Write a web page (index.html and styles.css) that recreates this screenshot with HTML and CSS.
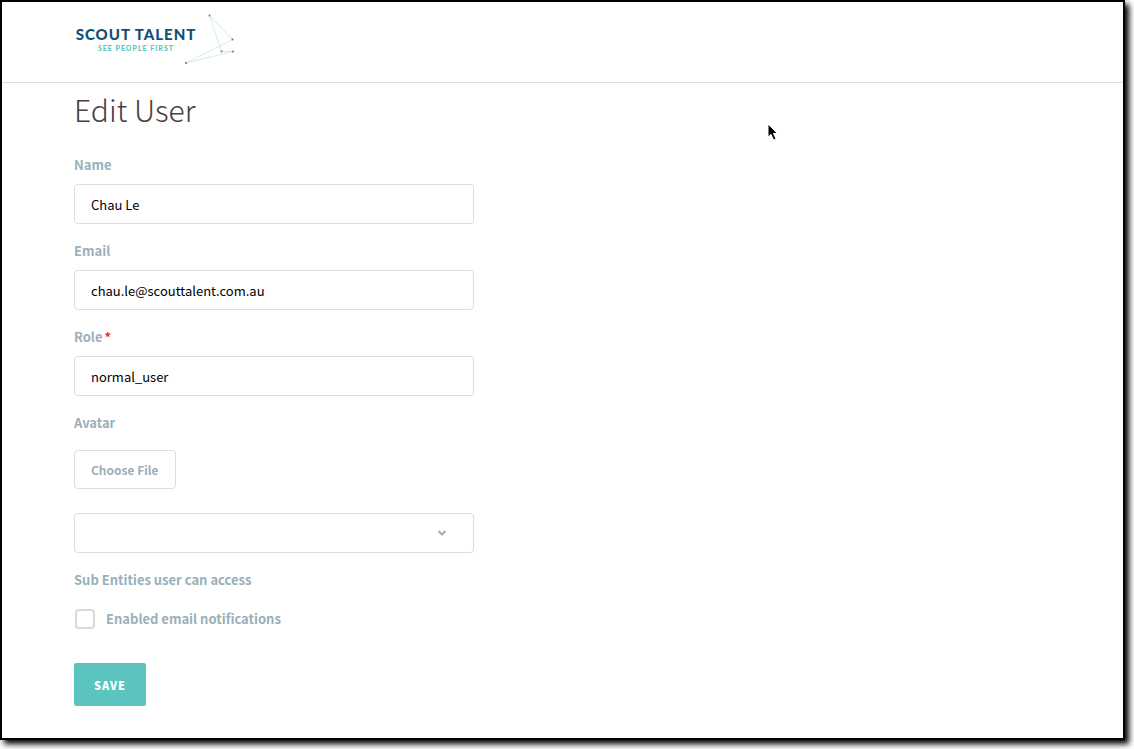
FILE: index.html
```html
<!DOCTYPE html>
<html lang="en">
<head>
  <meta charset="UTF-8">
  <meta name="viewport" content="width=device-width, initial-scale=1">
  <title>Edit User</title>
  <link rel="stylesheet" href="styles.css">
</head>
<body>

<div class="window">
  <header class="header">
    <a class="logo" href="#">
      <span class="logo-text">
        <span class="logo-name">SCOUT TALENT</span>
        <span class="logo-tagline">SEE PEOPLE FIRST</span>
      </span>
      <svg class="logo-mark" viewBox="184 13 52 52" width="52" height="52" aria-hidden="true">
        <path d="M186 63 L232.500 39.500 L209.500 15.500 L221.500 51.500 H233 Z" fill="none" stroke="#c4eae4" stroke-width=".8"/>
        <g fill="#4f7a8e">
          <circle cx="186" cy="63" r="1"/>
          <circle cx="232.500" cy="39.500" r="1"/>
          <circle cx="209.500" cy="15.500" r="1"/>
          <circle cx="221.500" cy="51.500" r="1"/>
          <circle cx="233" cy="51.500" r="1"/>
        </g>
      </svg>
    </a>
  </header>

  <main class="content">
    <h1>Edit User</h1>

    <form class="form">
      <div class="field">
        <label for="name">Name</label>
        <input type="text" id="name" value="Chau Le">
      </div>

      <div class="field">
        <label for="email">Email</label>
        <input type="email" id="email" value="chau.le@scouttalent.com.au">
      </div>

      <div class="field">
        <label for="role">Role<span class="required">*</span></label>
        <input type="text" id="role" value="normal_user" required>
      </div>

      <div class="field avatar">
        <label for="avatar">Avatar</label>
        <button type="button" class="file-button" id="avatar">Choose File</button>
      </div>

      <div class="select">
        <select id="entities" aria-labelledby="entities-label">
          <option value=""></option>
        </select>
        <svg class="chevron" viewBox="0 0 10 8" width="10" height="8" aria-hidden="true">
          <path d="M1.500 2 L5 5.500 L8.500 2" fill="none" stroke="#9aafba" stroke-width="2"/>
        </svg>
      </div>
      <label for="entities" id="entities-label">Sub Entities user can access</label>

      <div class="check">
        <input type="checkbox" id="notifications">
        <label for="notifications">Enabled email notifications</label>
      </div>

      <button type="submit" class="save">SAVE</button>
    </form>
  </main>

  <svg class="cursor" viewBox="0 0 12 18" width="12" height="18" aria-hidden="true">
    <path d="M1 1 V14 L4 11.500 L6.500 17 L9 16 L6.500 10.500 H10.500 Z" fill="#000" stroke="#fff" stroke-width="1"/>
  </svg>
</div>

</body>
</html>
```

FILE: styles.css
```css
* {
  box-sizing: border-box;
}
body {
  margin: 0;
  padding: 0 9px 9px 0;
  background: #fff;
  color: #000;
  font-family: "Noto Sans CJK SC", "Noto Sans", sans-serif;
  font-size: 13px;
  line-height: 20px;
}
.window {
  position: relative;
  min-height: calc(100vh - 9px);
  border: 2px solid #000;
  background: #fff;
  box-shadow: 4px 4px 6px #000;
}
.header {
  padding: 11px 72px 17px;
  border-bottom: 1px solid #dcdde4;
}
.logo {
  display: flex;
  width: max-content;
  text-decoration: none;
}
.logo-text {
  display: flex;
  flex-direction: column;
  align-items: center;
  width: 124px;
  padding-top: 13px;
  white-space: nowrap;
}
/* the mark tucks under the end of the name */
.logo-mark {
  margin-left: -14px;
}
.logo-name {
  color: #124f73;
  font: 900 15px/16px Lato, sans-serif;
  letter-spacing: 1px;
}
.logo-tagline {
  color: #5bc4be;
  font: 900 7px/12px Lato, sans-serif;
  letter-spacing: 1px;
}
.content {
  padding: 6px 72px 32px;
}
h1 {
  margin: 0 0 26px;
  color: #4a4041;
  font-size: 30px;
  font-weight: 300;
  line-height: 40px;
}
.form {
  max-width: 400px;
}
.field {
  display: flex;
  flex-direction: column;
  align-items: flex-start;
  gap: 9px;
  margin-bottom: 17px;
}
label {
  color: #9aafba;
  font-weight: 700;
}
.required {
  margin-left: 2px;
  color: #f02a2a;
}
.field input,
.select select {
  width: 100%;
  height: 40px;
  padding: 0 16px;
  border: 1px solid #dcdde4;
  border-radius: 4px;
  background: #fff;
  color: #000;
  font: inherit;
}
.avatar {
  gap: 17px;
  margin-bottom: 24px;
}
.file-button {
  height: 39px;
  padding: 0 16px;
  border: 1px solid #dcdde4;
  border-radius: 4px;
  background: #fff;
  color: #9aafba;
  font: inherit;
  font-size: 12px;
  font-weight: 700;
}
.select {
  position: relative;
  margin-bottom: 17px;
}
.select select {
  display: block;
  appearance: none;
}
.chevron {
  position: absolute;
  top: 16px;
  right: 27px;
  pointer-events: none;
}
.check {
  display: flex;
  align-items: center;
  gap: 11px;
  margin: 19px 0 34px;
}
.check input {
  width: 20px;
  height: 20px;
  margin: 0 0 0 1px;
  border: 2px solid #d8d8d8;
  border-radius: 4px;
  background: #fff;
  appearance: none;
}
.check input:checked {
  background: #5bc4be;
}
.save {
  display: block;
  height: 43px;
  padding: 0 20px;
  border: none;
  border-radius: 2px;
  background: #5bc4be;
  color: #fff;
  font: inherit;
  font-size: 11px;
  font-weight: 900;
  letter-spacing: 1px;
  cursor: pointer;
}
.cursor {
  position: absolute;
  top: 121px;
  left: 765px;
}
```
